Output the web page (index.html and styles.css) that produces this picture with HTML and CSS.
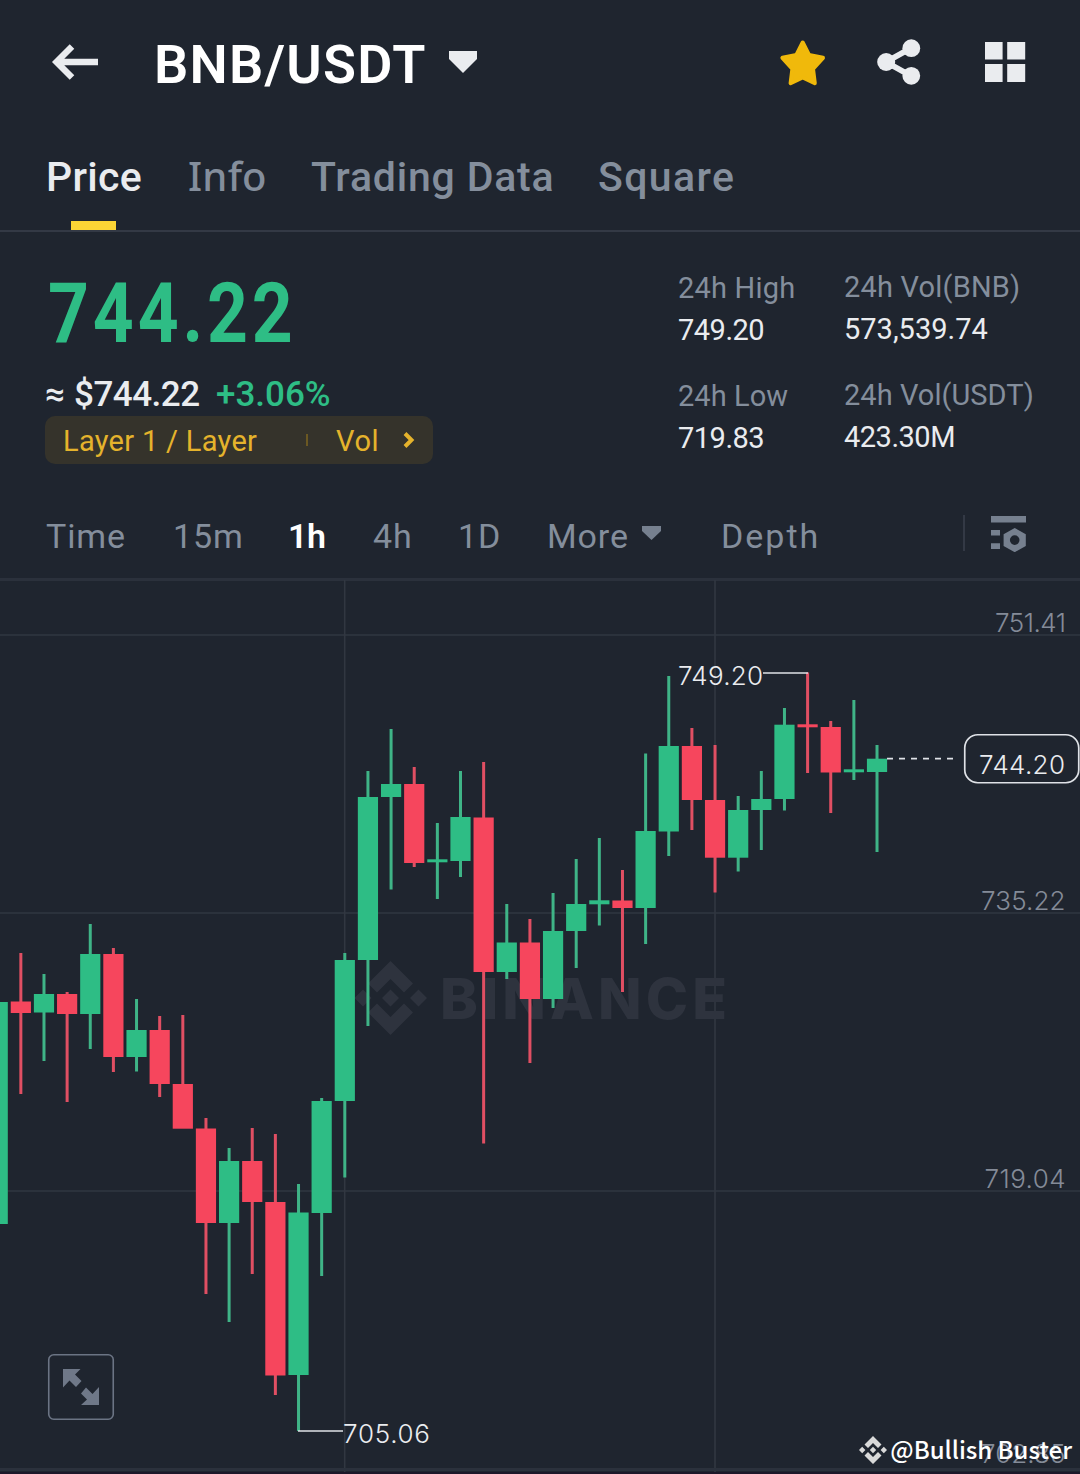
FILE: index.html
```html
<!DOCTYPE html>
<html lang="en">
<head>
<meta charset="utf-8">
<title>BNB/USDT</title>
<link rel="stylesheet" href="styles.css">
</head>
<body>
<main class="screen">
  <header class="topbar">
    <svg class="icon icon-back" viewBox="0 0 48 48"><path d="M21 8.5 5.5 24 21 39.5M6 24H47" fill="none" stroke="currentColor" stroke-width="6.4"/></svg>
    <h1 class="pair">BNB/USDT</h1>
    <svg class="pair-caret" viewBox="0 0 28 22"><path d="M0 0H28V8L14 22 0 8Z" fill="currentColor"/></svg>
    <svg class="icon icon-star" viewBox="0 0 48 48"><path d="M23.7 4.5 30 17 44 19.8 34 30.8 35.8 45.2 23.7 39.5 11.6 45.2 13.4 30.8 3.4 19.8 17.4 17Z" fill="currentColor" stroke="currentColor" stroke-width="4" stroke-linejoin="round"/></svg>
    <svg class="icon icon-share" viewBox="0 0 48 48"><path d="M36.2 10 11 24 36.2 38" fill="none" stroke="currentColor" stroke-width="5.8"/><circle cx="36.3" cy="10.2" r="8.9" fill="currentColor"/><circle cx="11.2" cy="24" r="9" fill="currentColor"/><circle cx="36.3" cy="37.8" r="8.9" fill="currentColor"/></svg>
    <svg class="icon icon-grid" viewBox="0 0 48 48"><path d="M4 4H21.6V21.4H4ZM26.2 4H44.2V21.4H26.2ZM4 26H21.6V44H4ZM26.2 26H44.2V44H26.2Z" fill="currentColor"/></svg>
  </header>

  <nav class="tabs">
    <a class="tab tab-active">Price</a>
    <a class="tab tab-info">Info</a>
    <a class="tab">Trading Data</a>
    <a class="tab tab-square">Square</a>
  </nav>

  <section class="summary">
    <div class="quote">
      <div class="last-price">744.22</div>
      <div class="fiat"><span>≈</span><span class="fiat-value">$744.22</span><span class="change">+3.06%</span></div>
      <div class="tag">
        <span class="tag-name">Layer 1 / Layer</span>
        <span class="tag-divider"></span>
        <span class="tag-vol">Vol</span>
        <svg class="tag-chevron" viewBox="0 0 14 18"><path d="M3 2.5 9.5 9 3 15.5" fill="none" stroke="currentColor" stroke-width="4"/></svg>
      </div>
    </div>
    <dl class="stats">
      <div class="stat"><dt>24h High</dt><dd>749.20</dd></div>
      <div class="stat stat-vol"><dt>24h Vol(BNB)</dt><dd class="wide">573,539.74</dd></div>
      <div class="stat"><dt class="tight">24h Low</dt><dd>719.83</dd></div>
      <div class="stat stat-vol"><dt class="tight">24h Vol(USDT)</dt><dd>423.30M</dd></div>
    </dl>
  </section>

  <nav class="intervals">
    <a class="interval">Time</a>
    <a class="interval">15m</a>
    <a class="interval interval-active">1h</a>
    <a class="interval">4h</a>
    <a class="interval">1D</a>
    <a class="interval">More</a>
    <svg class="more-caret" viewBox="0 0 19 14"><path d="M0 0H19V5L9.5 14 0 5Z" fill="currentColor"/></svg>
    <a class="interval interval-depth">Depth</a>
    <span class="interval-divider"></span>
    <svg class="settings" viewBox="0 0 36 36"><path d="M0 0H35V6.6H0ZM0 14H9V19.4H0ZM0 27.3H9V33H0ZM23.7 12 34.8 18.2V30L23.7 36.2 12.6 30V18.2ZM23.7 19.3A4.8 4.8 0 1 0 23.7 28.9 4.8 4.8 0 1 0 23.7 19.3Z" fill="currentColor" fill-rule="evenodd"/></svg>
  </nav>

  <section class="chart-area">
    <svg class="chart" viewBox="0 578 1080 896">
      <g class="gridlines">
        <path class="frame" d="M0 579.5H1080"/>
        <path d="M0 635H1080M0 913H1080M0 1191H1080M344.7 580V1474M715 580V1474"/>
        <path class="frame" d="M0 1469.5H1080"/>
      </g>
      <rect class="next-pane" x="0" y="1472" width="1080" height="2"/>

      <g class="brand">
        <path d="M390.500 961 413 983.500 404 992.500 390.500 979 377 992.500 368 983.500ZM390.500 1035 413 1012.500 404 1003.500 390.500 1017 377 1003.500 368 1012.500ZM390.500 989.500 399 998 390.500 1006.500 382 998ZM363 989.500 371.500 998 363 1006.500 354.500 998ZM418.500 989.500 427 998 418.500 1006.500 410 998Z"/>
        <text x="440" y="1018.500" textLength="287">BINANCE</text>
      </g>

      <g class="axis">
        <text x="995" y="631.500" textLength="71">751.41</text>
        <text x="981" y="909.500" textLength="84.500">735.22</text>
        <text x="984.500" y="1187.500" textLength="81">719.04</text>
        <text x="981" y="1462.500" textLength="84.500">702.85</text>
      </g>

      <g id="candles"></g>

      <g class="marks">
        <path d="M763 673H808M298 1431H343"/>
        <path d="M887 758.700H954" stroke-dasharray="6 6"/>
        <rect x="964.750" y="734.750" width="114" height="48" rx="13"/>
        <text x="678" y="684.700" textLength="85">749.20</text>
        <text x="343" y="1442.500" textLength="87">705.06</text>
        <text x="979" y="773.700" textLength="86">744.20</text>
      </g>

      <g class="expand">
        <rect x="48.750" y="1354.750" width="64.500" height="64.500" rx="5"/>
        <path d="M63 1369H80.500L75 1374.500 81.500 1381 76 1387 69.500 1380.500 63 1387.500ZM99 1405H81L87 1399.500 81 1393.500 86 1387.500 92.500 1394 99 1387Z"/>
      </g>
    </svg>
    <div class="credit">
      <svg class="credit-logo" viewBox="0 0 28 28"><path d="M14 0 22.500 8.500 19 12 14 7 9 12 5.500 8.500ZM14 28 22.500 19.500 19 16 14 21 9 16 5.500 19.500ZM14 10.800 17.200 14 14 17.200 10.800 14ZM3.200 10.800 6.400 14 3.200 17.200 0 14ZM24.800 10.800 28 14 24.800 17.200 21.600 14Z" fill="currentColor"/></svg>
      <span>@Bullish Buster</span>
    </div>
  </section>
</main>
<script src="chart.js"></script>
</body>
</html>
```
FILE: styles.css
```css
* { box-sizing: border-box; }

body {
  margin: 0;
  background: #1f252f;
  color: #eaecef;
  font-family: Roboto, "Liberation Sans", sans-serif;
}

h1, dl, dd { margin: 0; font-weight: inherit; }
svg { display: block; flex: none; }

.screen {
  width: 1080px;
  height: 1474px;
  overflow: hidden;
}

/* Top bar */
.topbar {
  display: flex;
  align-items: center;
  height: 124px;
  padding: 0 51px;
}
.icon { width: 48px; height: 48px; }
.pair {
  width: 295px;
  margin-left: 55px;
  padding-top: 5px;
  font-size: 54px;
  font-weight: 600;
  line-height: 60px;
  letter-spacing: 1.25px;
  color: #fff;
  white-space: nowrap;
}
.pair-caret { width: 28px; height: 22px; }
.icon-star { margin-left: auto; color: #f0b90b; }
.icon-share { margin-left: 48px; }
.icon-grid { margin-left: 58px; }

/* Section tabs */
.tabs {
  display: grid;
  grid-template-columns: 140px 125px 287px auto;
  height: 108px;
  padding-left: 46px;
  border-bottom: 2px solid #333945;
  font-size: 41px;
  font-weight: 500;
  line-height: 106px;
  letter-spacing: 0.8px;
  color: #848e9c;
}
.tab { position: relative; white-space: nowrap; }
.tab-active { color: #eaecef; letter-spacing: 0.3px; }
.tab-active::after {
  content: "";
  position: absolute;
  left: 25px;
  bottom: 0;
  width: 45px;
  height: 9px;
  background: #fcd535;
}
/* Noto Sans draws the capital I with serifs */
.tab-info {
  padding-left: 2px;
  font-family: "Noto Sans", Roboto, sans-serif;
  font-size: 40px;
  line-height: 104px;
  letter-spacing: 0.2px;
}
.tab-square { letter-spacing: 1.4px; }

/* Price summary */
.summary {
  display: flex;
  justify-content: space-between;
  height: 264px;
}
.quote { padding: 37px 0 0 45px; }
.last-price {
  padding-left: 3px;
  font-size: 83px;
  font-weight: 700;
  line-height: 90px;
  letter-spacing: 4.5px;
  color: #2ebd85;
  transform: scaleX(0.86);
  transform-origin: 3px 0;
}
.fiat {
  display: grid;
  grid-template-columns: 29px 142px auto;
  height: 43px;
  margin-top: 14px;
  font-size: 35px;
  font-weight: 500;
  line-height: 44px;
}
.fiat-value { letter-spacing: -0.5px; }
.change { color: #2ebd85; }
.tag {
  display: flex;
  align-items: center;
  width: 388px;
  height: 48px;
  padding-left: 18px;
  border-radius: 10px;
  background: #35332b;
  color: #e5b32c;
  font-size: 29px;
  line-height: 48px;
}
.tag-name { width: 243px; padding-top: 2px; letter-spacing: 0.3px; }
.tag-divider { width: 2px; height: 12px; background: #6b5822; }
.tag-vol { width: 66px; margin-left: 28px; padding-top: 2px; letter-spacing: 0.6px; }
.tag-chevron { width: 14px; height: 18px; }

.stats {
  display: grid;
  grid-template-columns: 166px 236px;
  grid-auto-rows: 84px;
  row-gap: 24px;
  padding-top: 35px;
  font-size: 29px;
  line-height: 42px;
  white-space: nowrap;
}
.stat-vol { margin-top: -1px; }
.stat dt { color: #848e9c; letter-spacing: 0.2px; }
.stat .tight { letter-spacing: 0.05px; }
.stat dd { font-weight: 450; letter-spacing: -0.5px; }
.stat .wide { letter-spacing: 0; }

/* Chart intervals */
.intervals {
  display: grid;
  grid-template-columns: 127px 115px 85px 85px 89px 95px 79px 242px 28px auto;
  align-items: center;
  height: 82px;
  padding-left: 46px;
  font-size: 34px;
  line-height: 80px;
  letter-spacing: 0.9px;
  color: #848e9c;
}
.interval { margin-bottom: 2px; }
.interval-active { font-weight: 600; letter-spacing: -0.4px; color: #fff; }
.interval-depth { letter-spacing: 2px; }
.more-caret { width: 19px; height: 14px; margin-bottom: 8px; color: #76808f; }
.interval-divider { width: 2px; height: 36px; margin-bottom: 8px; background: #333945; }
.settings { width: 36px; height: 36px; margin-bottom: 6px; color: #76808f; }

/* Candlestick chart */
.chart-area { position: relative; height: 896px; }
.chart {
  width: 1080px;
  height: 896px;
  font-family: Inter, "Liberation Sans", sans-serif;
  font-size: 26px;
  font-weight: 300;
}
.gridlines { stroke: #313741; stroke-width: 1.6; fill: none; }
.gridlines .frame { stroke: #2b313c; stroke-width: 3; }
.next-pane { fill: #1c1729; }
.brand { fill: #2e333e; font-size: 57px; font-weight: 800; }
.axis { fill: #848b98; }
.up { fill: #2ebd85; }
.down { fill: #f6465d; }
.wick.up { fill: #3fb487; }
.wick.down { fill: #e04f63; }
.marks path, .marks rect { fill: none; stroke: #dfe2e7; stroke-width: 1.7; }
.marks text { fill: #eaecef; }
.expand rect { fill: none; stroke: #6b7484; stroke-width: 1.6; }
.expand path { fill: #6f7888; }

/* Author credit over the chart */
.credit {
  position: absolute;
  right: 8px;
  bottom: 7px;
  display: flex;
  align-items: center;
  gap: 3px;
  font-family: "Noto Sans CJK SC", sans-serif;
  font-size: 24px;
  font-weight: 500;
  line-height: 36px;
  color: #fff;
}
.credit-logo { width: 28px; height: 28px; margin-top: 2px; color: #d9d9d9; }
```
FILE: chart.js
```
// Each candle: [direction, body top, body bottom, wick top, wick bottom]
const candles = [
  ["up", 1002, 1224, 1002, 1224],
  ["down", 1001.5, 1013, 953, 1094],
  ["up", 994, 1012.5, 974, 1061],
  ["down", 994, 1014, 992, 1102],
  ["up", 954, 1014, 924, 1049],
  ["down", 954, 1057, 948, 1072],
  ["up", 1030, 1057, 999, 1071.5],
  ["down", 1030, 1084, 1016, 1097],
  ["down", 1084, 1128.7, 1015, 1128],
  ["down", 1128.5, 1223, 1118, 1294],
  ["up", 1161, 1223, 1148, 1322],
  ["down", 1161, 1202, 1128, 1274],
  ["down", 1202, 1375.5, 1134, 1395],
  ["up", 1212.5, 1375, 1184, 1431],
  ["up", 1101, 1213, 1098, 1276],
  ["up", 960, 1101, 953, 1177.5],
  ["up", 797, 960, 771, 1026],
  ["up", 784, 797, 729, 889.5],
  ["down", 784, 863, 767, 867],
  ["up", 859.3, 862.3, 823, 899],
  ["up", 817, 861, 771, 877],
  ["down", 817.5, 972, 762, 1143.5],
  ["up", 942.5, 972, 904, 979],
  ["down", 942.5, 999, 919, 1063],
  ["up", 931, 999, 893, 1008],
  ["up", 904, 931, 859, 968],
  ["up", 900.3, 904.3, 838, 925.5],
  ["down", 900.5, 908, 870, 992],
  ["up", 831, 908, 753.5, 944],
  ["up", 746, 831.5, 676, 856],
  ["down", 746, 800, 728, 830],
  ["down", 800, 857.7, 745, 892.5],
  ["up", 810, 857.7, 796, 871.5],
  ["up", 799, 810, 771, 850],
  ["up", 724.7, 799, 708, 810.5],
  ["down", 724.3, 727.3, 672.5, 773],
  ["down", 727, 772.5, 721, 813],
  ["up", 769.3, 772.3, 700, 780],
  ["up", 758.7, 772, 745, 852]
];

const SVG = "http://www.w3.org/2000/svg";
const group = document.getElementById("candles");

function bar(x, top, bottom, width, name) {
  const rect = document.createElementNS(SVG, "rect");
  rect.setAttribute("x", (x - width / 2).toFixed(2));
  rect.setAttribute("y", top);
  rect.setAttribute("width", width);
  rect.setAttribute("height", bottom - top);
  rect.setAttribute("class", name);
  group.appendChild(rect);
}

candles.forEach(([dir, top, bottom, high, low], i) => {
  const x = -2.3 + i * 23.14;
  bar(x, high, low, 3, "wick " + dir);
  bar(x, top, bottom, 20.2, dir);
});
```
